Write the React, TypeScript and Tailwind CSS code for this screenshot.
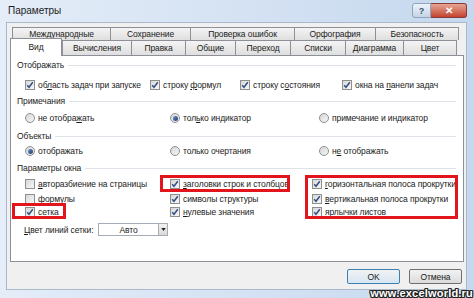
import React, { ReactNode } from "react";

// check box as drawn by Windows 7
function Box({ checked }: { checked: boolean }) {
  return (
    <span className="flex h-[10px] w-[10px] shrink-0 items-center justify-center border border-[#8e8f8f] bg-gradient-to-br from-[#d8d8d8] to-[#f7f7f7]">
      {checked && (
        <svg viewBox="0 0 8 8" className="h-[8px] w-[8px]">
          <path d="M1.2 4.2 L3 6.2 L6.8 1.2" fill="none" stroke="#334f86" strokeWidth="1.5" />
        </svg>
      )}
    </span>
  );
}

function Radio({ on }: { on: boolean }) {
  return (
    <span className="flex h-[10px] w-[10px] shrink-0 items-center justify-center rounded-full border border-[#8e8f8f] bg-gradient-to-br from-[#d5d5d5] to-[#f7f7f7]">
      {on && <span className="h-[5px] w-[5px] rounded-full bg-gradient-to-br from-[#6a8fc4] to-[#1d3d78]" />}
    </span>
  );
}

function Check({ checked, w, children }: { checked: boolean; w?: string; children: ReactNode }) {
  return (
    <div className={`flex h-[12px] shrink-0 items-center gap-[3px] ${w ?? ""}`}>
      <Box checked={checked} />
      <span className="whitespace-nowrap">{children}</span>
    </div>
  );
}

function Opt({ on, w, children }: { on: boolean; w?: string; children: ReactNode }) {
  return (
    <div className={`flex h-[12px] shrink-0 items-center gap-[3px] ${w ?? ""}`}>
      <Radio on={on} />
      <span className="whitespace-nowrap">{children}</span>
    </div>
  );
}

function Group({ title, mt }: { title: string; mt: string }) {
  return (
    <div className={`flex h-[12px] items-center gap-[4px] pl-[6px] pr-[7px] ${mt}`}>
      <span className="whitespace-nowrap">{title}</span>
      <span className="h-px flex-1 bg-[#dde3e8]" />
    </div>
  );
}

function Tab({ w, children, last }: { w: string; children: ReactNode; last?: boolean }) {
  return (
    <div
      className={`flex h-full items-center justify-center border-t border-l border-[#8d9096] bg-gradient-to-b from-[#f4f4f4] to-[#dfdfdf] ${w} ${last ? "border-r" : ""}`}
    >
      {children}
    </div>
  );
}

export default function App() {
  return (
    <div className="relative flex h-[298px] w-[474px] flex-col overflow-hidden bg-gradient-to-r from-[#e4edf8] to-[#c6d8ee] font-['Liberation_Sans',sans-serif] text-[8.5px] leading-[12px] tracking-[-0.1px] text-[#1b1b1b]">
      {/* title bar */}
      <div className="flex h-[22px] shrink-0 items-start justify-between">
        <span className="pl-[8px] pt-[5px] text-[10px] tracking-normal text-[#1d1d1d]">Параметры</span>
        <div className="mr-[7px] mt-[3px] flex h-[15px]">
          <div className="flex w-[19px] items-center justify-center rounded-l-[3px] border border-[#8ea3bd] bg-gradient-to-b from-[#eef3fa] to-[#c5d4e6] text-[9px] font-bold text-[#41536b]">
            ?
          </div>
          <div className="flex w-[36px] items-center justify-center rounded-r-[3px] border border-l-0 border-[#8b3a3a] bg-gradient-to-b from-[#e6a493] to-[#c1432f] text-[10px] font-bold text-white">
            ✕
          </div>
        </div>
      </div>

      {/* client area */}
      <div className="ml-[6px] mr-[7px] flex h-[268px] flex-col border border-[#a9b8cb] bg-[#f0f0f0]">
        {/* tab rows */}
        <div className="mt-[4px] flex h-[13px] pl-[5px]">
          <Tab w="w-[98px]">Международные</Tab>
          <Tab w="w-[80px]">Сохранение</Tab>
          <Tab w="w-[104px]">Проверка ошибок</Tab>
          <Tab w="w-[81px]">Орфография</Tab>
          <Tab w="w-[84px]" last>
            Безопасность
          </Tab>
        </div>
        <div className="flex h-[15px] items-end pl-[5px]">
          <div className="relative z-10 -mb-px -ml-[2px] flex h-[18px] w-[52px] items-center justify-center border border-b-0 border-[#8d9096] bg-white pb-[2px]">
            Вид
          </div>
          <div className="flex h-full">
            <Tab w="w-[69px]">Вычисления</Tab>
            <Tab w="w-[54px]">Правка</Tab>
            <Tab w="w-[50px]">Общие</Tab>
            <Tab w="w-[55px]">Переход</Tab>
            <Tab w="w-[55px]">Списки</Tab>
            <Tab w="w-[58px]">Диаграмма</Tab>
            <Tab w="w-[54px]" last>
              Цвет
            </Tab>
          </div>
        </div>

        {/* page */}
        <div className="relative ml-[3px] mr-[2px] flex h-[207px] flex-col border border-[#8d9096] bg-white">
          <Group title="Отображать" mt="mt-[3px]" />
          <div className="mt-[8px] flex pl-[14px]">
            <Check checked w="w-[125px]">
              об<u>л</u>асть задач при запуске
            </Check>
            <Check checked w="w-[90px]">
              строку <u>ф</u>ормул
            </Check>
            <Check checked w="w-[102px]">
              строку с<u>о</u>стояния
            </Check>
            <Check checked>
              окна на <u>п</u>анели задач
            </Check>
          </div>

          <Group title="Примечания" mt="mt-[4px]" />
          <div className="mt-[5px] flex pl-[14px]">
            <Opt on={false} w="w-[145px]">
              не отобра<u>ж</u>ать
            </Opt>
            <Opt on w="w-[149px]">
              тол<u>ь</u>ко индикатор
            </Opt>
            <Opt on={false}>
              примечание и ин<u>д</u>икатор
            </Opt>
          </div>

          <Group title="Объекты" mt="mt-[6px]" />
          <div className="mt-[3px] flex pl-[14px]">
            <Opt on w="w-[145px]">
              отображать
            </Opt>
            <Opt on={false} w="w-[149px]">
              только очертания
            </Opt>
            <Opt on={false}>
              н<u>е</u> отображать
            </Opt>
          </div>

          <Group title="Параметры окна" mt="mt-[5px]" />
          <div className="mt-[4px] flex pl-[14px]">
            <Check checked={false} w="w-[145px]">
              <u>а</u>вторазбиение на страницы
            </Check>
            <Check checked w="w-[142px]">
              <u>з</u>аголовки строк и столбцов
            </Check>
            <Check checked>
              <u>г</u>оризонтальная полоса прокрутки
            </Check>
          </div>
          <div className="mt-[3px] flex pl-[14px]">
            <Check checked={false} w="w-[145px]">
              фор<u>м</u>улы
            </Check>
            <Check checked w="w-[142px]">
              символы структуры
            </Check>
            <Check checked>
              <u>в</u>ертикальная полоса прокрутки
            </Check>
          </div>
          <div className="mt-[1px] flex pl-[14px]">
            <Check checked w="w-[145px]">
              се<u>т</u>ка
            </Check>
            <Check checked w="w-[142px]">
              <u>н</u>улевые значения
            </Check>
            <Check checked>
              <u>я</u>рлычки листов
            </Check>
          </div>

          <div className="mt-[5px] flex items-center pl-[13px]">
            <span className="w-[74px] whitespace-nowrap">
              <u>Ц</u>вет линий сетки:
            </span>
            <div className="flex h-[13px] w-[70px] border border-[#a5acb5] bg-white">
              <span className="flex flex-1 items-center justify-center">Авто</span>
              <span className="flex w-[9px] items-center justify-center border-l border-[#a5acb5] bg-gradient-to-b from-[#f3f3f3] to-[#d9d9d9]">
                <svg viewBox="0 0 6 4" className="h-[3px] w-[5px]">
                  <path d="M0 0 H6 L3 4 Z" fill="#222" />
                </svg>
              </span>
            </div>
          </div>

          {/* red highlight frames */}
          <div className="pointer-events-none absolute left-[1px] top-[147px] h-[16px] w-[54px] border-[3px] border-[#e2141c]" />
          <div className="pointer-events-none absolute left-[149px] top-[119px] h-[17px] w-[130px] border-[3px] border-[#e2141c]" />
          <div className="pointer-events-none absolute left-[294px] top-[119px] h-[44px] w-[153px] border-[3px] border-[#e2141c]" />
        </div>

        {/* buttons */}
        <div className="mt-[7px] flex justify-end gap-[9px] pr-[4px]">
          <button className="flex h-[15px] w-[53px] items-center justify-center rounded-[2px] border border-[#3c7fb1] bg-gradient-to-b from-[#f2f2f2] to-[#d6e6f3] text-[8.5px]">
            OK
          </button>
          <button className="flex h-[15px] w-[53px] items-center justify-center rounded-[2px] border border-[#707070] bg-gradient-to-b from-[#f2f2f2] to-[#dcdcdc] text-[8.5px]">
            Отмена
          </button>
        </div>
      </div>

      <span className="absolute bottom-[-1px] right-[1px] font-['Liberation_Sans',sans-serif] text-[11px] font-bold tracking-[0.2px] text-white [text-shadow:1px_0_#222,-1px_0_#222,0_1px_#222,0_-1px_#222,1px_1px_#222,-1px_-1px_#222,1px_-1px_#222,-1px_1px_#222]">
        www.excelworld.ru
      </span>
    </div>
  );
}
